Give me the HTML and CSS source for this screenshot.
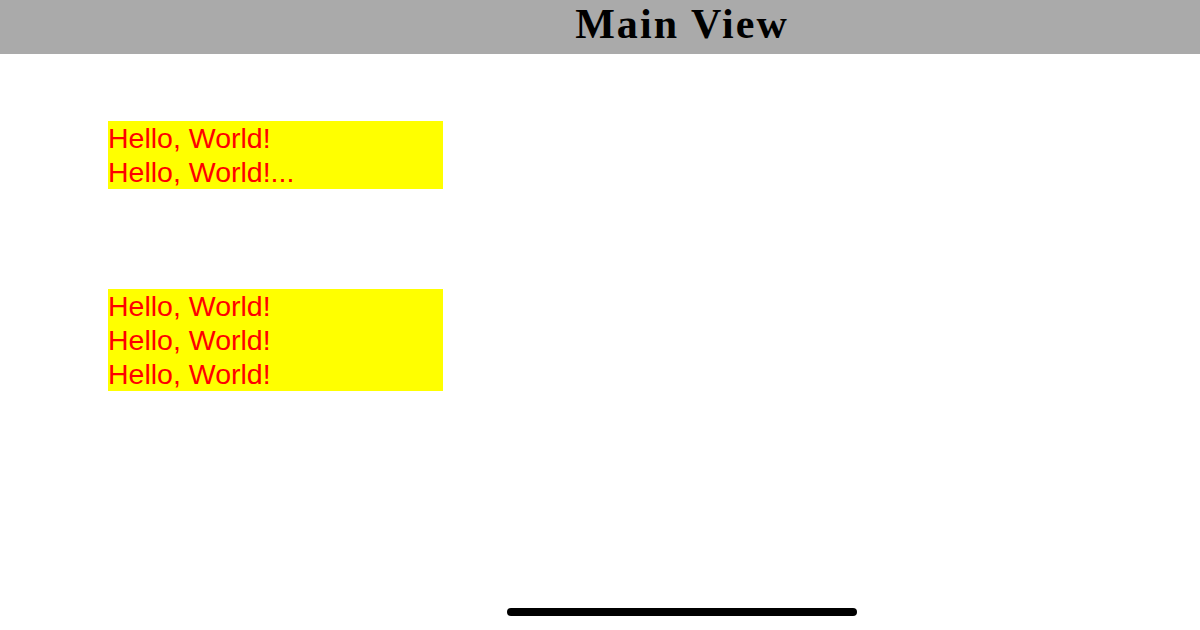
FILE: index.html
```html
<!DOCTYPE html>
<html lang="en">
<head>
<meta charset="utf-8">
<title>Main View</title>
<link rel="stylesheet" href="styles.css">
</head>
<body>
  <div class="screen">
    <header class="nav-bar">
      <h1 class="nav-title">Main View</h1>
    </header>
    <main class="content">
      <div class="label-box">
        <div class="label-line">Hello, World!</div>
        <div class="label-line">Hello, World!...</div>
      </div>
      <div class="label-box">
        <div class="label-line">Hello, World!</div>
        <div class="label-line">Hello, World!</div>
        <div class="label-line">Hello, World!</div>
      </div>
    </main>
    <div class="home-area">
      <div class="home-indicator"></div>
    </div>
  </div>
</body>
</html>
```

FILE: styles.css
```css
html, body {
  margin: 0;
  padding: 0;
  background: #ffffff;
}

.screen {
  width: 1200px;
  height: 630px;
  display: flex;
  flex-direction: column;
  overflow: hidden;
}

.nav-bar {
  height: 54px;
  flex: none;
  background: #aaaaaa;
  display: flex;
  justify-content: center;
  align-items: flex-start;
  padding-left: 164px;
  box-sizing: border-box;
}

.nav-title {
  margin: 0;
  font-family: "Liberation Serif", "Times New Roman", serif;
  font-weight: bold;
  font-size: 42px;
  line-height: normal;
  letter-spacing: 2.1px;
  color: #000000;
}

.content {
  flex: 1;
  display: flex;
  flex-direction: column;
  align-items: flex-start;
  gap: 100px;
  padding: 67px 0 0 108px;
}

.label-box {
  width: 335px;
  background: #ffff00;
}

.label-line {
  font-family: "Liberation Sans", Arial, sans-serif;
  font-size: 28.5px;
  line-height: 34px;
  color: #ff0000;
  white-space: nowrap;
}

.home-area {
  flex: none;
  height: 22px;
  display: flex;
  justify-content: center;
  padding-left: 164px;
}

.home-indicator {
  width: 350px;
  height: 8px;
  border-radius: 4px;
  background: #000000;
}
```
